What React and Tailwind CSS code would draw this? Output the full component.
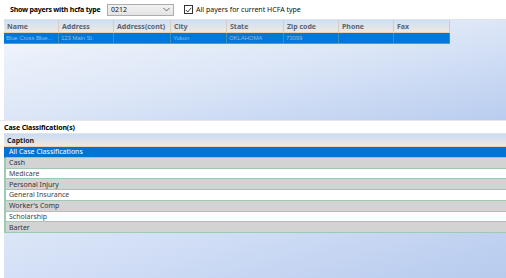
const payerColumns = [
  { title: 'Name', width: 'w-[55px]', value: 'Blue Cross Blue...' },
  { title: 'Address', width: 'w-[55px]', value: '123 Main St.' },
  { title: 'Address(cont)', width: 'w-[57px]', value: '' },
  { title: 'City', width: 'w-[56px]', value: 'Yukon' },
  { title: 'State', width: 'w-[57px]', value: 'OKLAHOMA' },
  { title: 'Zip code', width: 'w-[55px]', value: '73099' },
  { title: 'Phone', width: 'w-[55px]', value: '' },
  { title: 'Fax', width: 'w-[56px]', value: '' },
]

const classifications = [
  'All Case Classifications',
  'Cash',
  'Medicare',
  'Personal Injury',
  'General Insurance',
  "Worker's Comp",
  'Scholarship',
  'Barter',
]

function ChevronDown() {
  return (
    <svg width="7" height="5" viewBox="0 0 7 5" className="text-[#606060]">
      <path d="M0.5 1 L3.5 4 L6.5 1" fill="none" stroke="currentColor" strokeWidth="0.9" />
    </svg>
  )
}

function CheckBox() {
  return (
    <span className="w-[9px] h-[9px] border border-[#333] bg-white flex items-center justify-center">
      <svg width="7" height="6" viewBox="0 0 7 6">
        <path d="M0.8 3 L2.7 5 L6.3 0.8" fill="none" stroke="#222" strokeWidth="0.9" />
      </svg>
    </span>
  )
}

export default function App() {
  return (
    <div className="w-[506px] h-[278px] bg-white overflow-hidden flex flex-col text-[7px] leading-none text-[#222] font-['Noto_Sans','Liberation_Sans',sans-serif]">
      {/* filtro */}
      <div className="h-[19px] flex items-center pl-[10px] shrink-0">
        <span className="font-bold text-[7px] tracking-[-0.2px] text-black w-[97px]">Show payers with hcfa type</span>
        <div className="w-[67px] h-[12px] border border-[#adadad] bg-gradient-to-b from-[#f2f2f2] to-[#e3e3e3] flex items-center justify-between pl-[3px] pr-[3px]">
          <span className="text-[#111]">0212</span>
          <ChevronDown />
        </div>
        <div className="flex items-center gap-[3px] ml-[10px]">
          <CheckBox />
          <span className="text-[#111]">All payers for current HCFA type</span>
        </div>
      </div>

      {/* grid pagatori */}
      <div className="ml-[4px] h-[101px] shrink-0 border-t border-[#dfe3ea] bg-gradient-to-br from-[#f4f7fc] via-[#dce6f7] to-[#b9cdef]">
        <div className="flex h-[13px] w-fit">
          {payerColumns.map((c) => (
            <div
              key={c.title}
              className={`${c.width} h-full flex items-center pl-[3px] font-bold text-[#5a6370] border-r border-[#d8cdbd] border-b border-b-[#e6d3b5] bg-gradient-to-b from-[#cddff6] to-[#efe8df]`}
            >
              {c.title}
            </div>
          ))}
        </div>
        <div className="flex h-[11px] w-fit bg-[#0078d7] border-b border-[#5aa58a]">
          {payerColumns.map((c) => (
            <div
              key={c.title}
              className={`${c.width} h-full flex items-center pl-[2px] text-[6px] tracking-[-0.1px] font-['Liberation_Sans',sans-serif] text-[#9fb7d4] border-r border-[#3d8fb8] whitespace-nowrap overflow-hidden`}
            >
              {c.value}
            </div>
          ))}
        </div>
      </div>

      {/* etichetta */}
      <div className="h-[13px] shrink-0 flex items-center pl-[4px] font-bold tracking-[-0.1px] text-black border-t border-[#e4e8ee]">
        Case Classification(s)
      </div>

      {/* grid classificazioni */}
      <div className="ml-[4px] flex-1 border-t border-[#dfe3ea] bg-gradient-to-br from-[#eef3fc] via-[#d4e0f6] to-[#b7cbee] flex flex-col">
        <div className="h-[13px] shrink-0 flex items-center pl-[3px] font-bold text-[#222] border-b border-[#e6d3b5] bg-gradient-to-b from-[#c9dcf6] to-[#efe8df]">
          Caption
        </div>
        {classifications.map((name, i) => {
          const selected = i === 0
          const gray = i % 2 === 1
          return (
            <div
              key={name}
              className={`h-[10.75px] shrink-0 flex items-center pl-[3px] border-b border-[#9ccab2] border-l-2 border-l-[#9ccab2] ${
                selected ? 'bg-[#0074d4] text-white border-l-[#0074d4]' : gray ? 'bg-[#d3d3d3] text-[#333]' : 'bg-white text-[#444]'
              }`}
            >
              {name}
            </div>
          )
        })}
      </div>
    </div>
  )
}
